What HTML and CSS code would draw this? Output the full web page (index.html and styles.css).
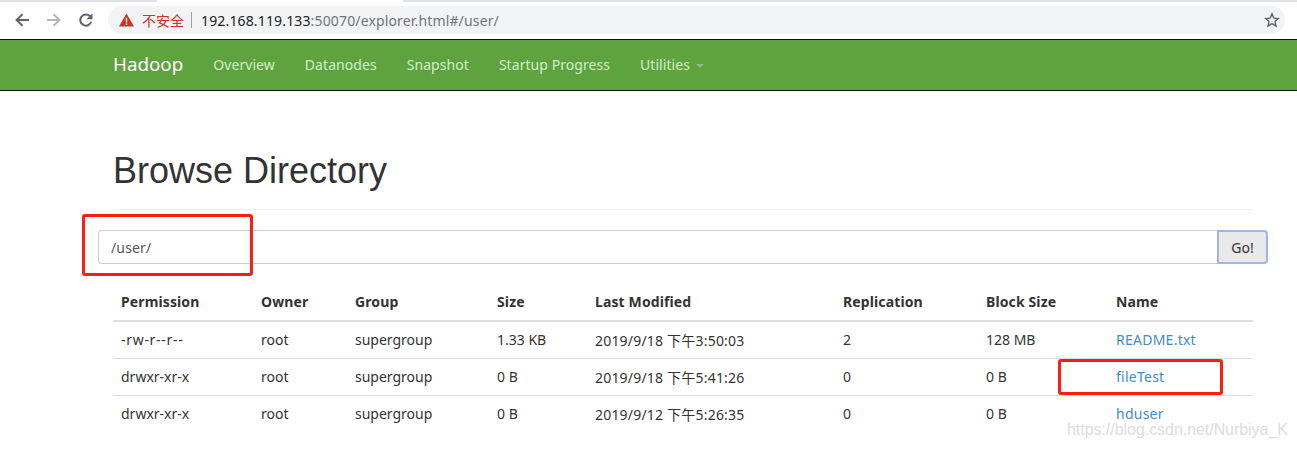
FILE: index.html
```html
<!DOCTYPE html>
<html lang="zh">
<head>
<meta charset="utf-8">
<title>Browsing HDFS</title>
<link rel="stylesheet" href="styles.css">
</head>
<body>
<div class="chrome">
  <div class="tabstrip"><span class="strip-a"></span><span class="strip-gap"></span><span class="strip-b"></span></div>
  <div class="toolbar">
    <svg class="tool-icon" width="16" height="16" viewBox="0 0 16 16"><path d="M15 8H3M8.5 2.2 2.6 8l5.900 5.800" fill="none" stroke="#5f6368" stroke-width="2"/></svg>
    <svg class="tool-icon" width="16" height="16" viewBox="0 0 16 16"><path d="M1 8h12M7.500 2.200 13.400 8l-5.900 5.800" fill="none" stroke="#b4b7bb" stroke-width="2"/></svg>
    <svg class="tool-icon" width="16" height="16" viewBox="0 0 16 16"><path d="M13.200 9.800A5.600 5.600 0 1 1 12 4.200" fill="none" stroke="#5f6368" stroke-width="2"/><path d="M14.500 1.200v6h-6z" fill="#5f6368"/></svg>
    <div class="omnibox">
      <svg class="warn" width="15" height="14" viewBox="0 0 15 14"><path d="M7.500.5 15 13.500H0z" fill="#d32f23"/><path d="M6.800 4.800h1.400v4.700H6.800zM6.800 10.500h1.400V12H6.800z" fill="#fff"/></svg>
      <span class="insecure">不安全</span>
      <span class="sep"></span>
      <span class="url"><span class="host">192.168.119.133</span>:50070/explorer.html#/user/</span>
      <svg class="star" width="16" height="16" viewBox="0 0 16 16"><path d="m8 1.800 1.800 4.300 4.600.4-3.500 3 1.100 4.500L8 11.600 4 14l1.100-4.500-3.500-3 4.600-.4z" fill="none" stroke="#5f6368" stroke-width="1.400"/></svg>
    </div>
  </div>
</div>

<nav class="navbar">
  <a class="brand">Hadoop</a>
  <a class="nav-link">Overview</a>
  <a class="nav-link">Datanodes</a>
  <a class="nav-link">Snapshot</a>
  <a class="nav-link">Startup Progress</a>
  <a class="nav-link">Utilities <span class="caret"></span></a>
</nav>

<main class="container">
  <div class="page-header"><h1>Browse Directory</h1></div>
  <div class="input-group">
    <input class="path-input" type="text" value="/user/">
    <button class="go-btn" type="button">Go!</button>
  </div>
  <table class="files">
    <colgroup>
      <col class="c1"><col class="c2"><col class="c3"><col class="c4"><col class="c5"><col class="c6"><col class="c7"><col class="c8">
    </colgroup>
    <thead>
      <tr><th>Permission</th><th>Owner</th><th>Group</th><th>Size</th><th>Last Modified</th><th>Replication</th><th>Block Size</th><th>Name</th></tr>
    </thead>
    <tbody>
      <tr><td class="dashed">-rw-r--r--</td><td>root</td><td>supergroup</td><td>1.33 KB</td><td class="date">2019/9/18 下午3:50:03</td><td>2</td><td>128 MB</td><td><a>README.txt</a></td></tr>
      <tr><td>drwxr-xr-x</td><td>root</td><td>supergroup</td><td>0 B</td><td class="date">2019/9/18 下午5:41:26</td><td>0</td><td>0 B</td><td><a>fileTest</a></td></tr>
      <tr><td>drwxr-xr-x</td><td>root</td><td>supergroup</td><td>0 B</td><td class="date">2019/9/12 下午5:26:35</td><td>0</td><td>0 B</td><td><a>hduser</a></td></tr>
    </tbody>
  </table>
</main>

<div class="mark mark-path"></div>
<div class="mark mark-file"></div>
<div class="watermark">https://blog.csdn.net/Nurbiya_K</div>
</body>
</html>
```

FILE: styles.css
```css
html, body {
  margin: 0;
  height: 449px;
  overflow: hidden;
  background: #fff;
  color: #333;
  font-family: "Noto Sans", "Noto Sans CJK SC", sans-serif;
  font-size: 14px;
}

.chrome { height: 39px; }

.tabstrip { display: flex; height: 2px; }
.strip-a { width: 157px; background: #dee1e6; }
.strip-gap { width: 246px; background: #fff; }
.strip-b { flex: 1; background: #dee1e6; }

.toolbar {
  display: flex;
  align-items: center;
  height: 32px;
  margin-top: 2px;
  padding-left: 14px;
  gap: 16px;
}
.tool-icon { flex: none; }

.omnibox {
  display: flex;
  align-items: center;
  width: 1177px;
  height: 28px;
  margin-left: -2px;
  padding-left: 11px;
  box-sizing: border-box;
  border-radius: 14px;
  background: #f1f3f4;
}
.warn { flex: none; }
.insecure {
  margin-left: 8px;
  color: #d32f23;
  font-size: 14px;
}
.sep {
  width: 1px;
  height: 16px;
  margin: 0 9px 0 7px;
  background: #9aa0a6;
}
.url {
  color: #70757a;
  font-size: 14px;
  letter-spacing: 0.15px;
}
.host { color: #202124; }
.star { margin-left: auto; margin-right: 5px; }

.navbar {
  display: flex;
  align-items: center;
  height: 48px;
  padding: 0 0 2px 113px;
  background: #5fa33e;
  border: 1px solid #101010;
  border-width: 1px 0;
}
.brand {
  margin-right: 30px;
  color: #fff;
  font-size: 18.8px;
}
.nav-link {
  margin-right: 30px;
  color: #d4eecb;
  font-size: 14px;
  letter-spacing: 0.06px;
}
.caret {
  display: inline-block;
  margin-left: 2px;
  vertical-align: middle;
  border-top: 4px solid #9cb58f;
  border-left: 4px solid transparent;
  border-right: 4px solid transparent;
}

.container {
  width: 1140px;
  margin-left: 113px;
}
.page-header {
  height: 119px;
  box-sizing: border-box;
  border-bottom: 1px solid #eee;
}
h1 {
  margin: 0;
  padding-top: 60px;
  color: #333;
  font-family: "Liberation Sans", Arial, sans-serif;
  font-size: 36px;
  font-weight: 500;
  line-height: 40px;
}

.input-group {
  display: flex;
  width: 1170px;
  height: 34px;
  margin: 20px 0 0 -15px;
}
.path-input {
  flex: 1;
  min-width: 0;
  padding: 0 12px;
  box-sizing: border-box;
  border: 1px solid #ccc;
  border-right: 0;
  border-radius: 4px 0 0 4px;
  outline: 0;
  color: #555;
  font: 14px "Noto Sans", sans-serif;
  letter-spacing: 0.15px;
}
.go-btn {
  width: 51px;
  padding: 0;
  border: 2px solid #9db8e8;
  border-radius: 0 4px 4px 0;
  background: #e9e9e9;
  color: #333;
  font: 14px "Noto Sans", sans-serif;
}

.files {
  width: 1140px;
  margin-top: 20px;
  table-layout: fixed;
  border-collapse: collapse;
}
.c1 { width: 140px; }
.c2 { width: 94px; }
.c3 { width: 142px; }
.c4 { width: 98px; }
.c5 { width: 248px; }
.c6 { width: 143px; }
.c7 { width: 130px; }
.c8 { width: 145px; }
th {
  height: 37px;
  padding: 0 8px 2px;
  box-sizing: border-box;
  border-bottom: 2px solid #ddd;
  text-align: left;
  font-weight: 700;
  letter-spacing: 0.12px;
}
td {
  height: 37px;
  padding: 0 8px;
  box-sizing: border-box;
  border-bottom: 1px solid #ddd;
}
td.date { letter-spacing: 0.2px; }
td.dashed { letter-spacing: 0.7px; }
tbody tr:last-child td { border-bottom: 0; }
td a { color: #428bca; letter-spacing: 0.25px; }

.mark {
  position: absolute;
  box-sizing: border-box;
  border: 3px solid #ff1d10;
  border-radius: 3px;
}
.mark-path { left: 82px; top: 214px; width: 171px; height: 62px; }
.mark-file { left: 1058px; top: 359px; width: 165px; height: 36px; }

.watermark {
  position: absolute;
  left: 1067px;
  top: 421px;
  color: #dcdcdc;
  font: 15.9px "Liberation Sans", Arial, sans-serif;
  white-space: nowrap;
}
```
